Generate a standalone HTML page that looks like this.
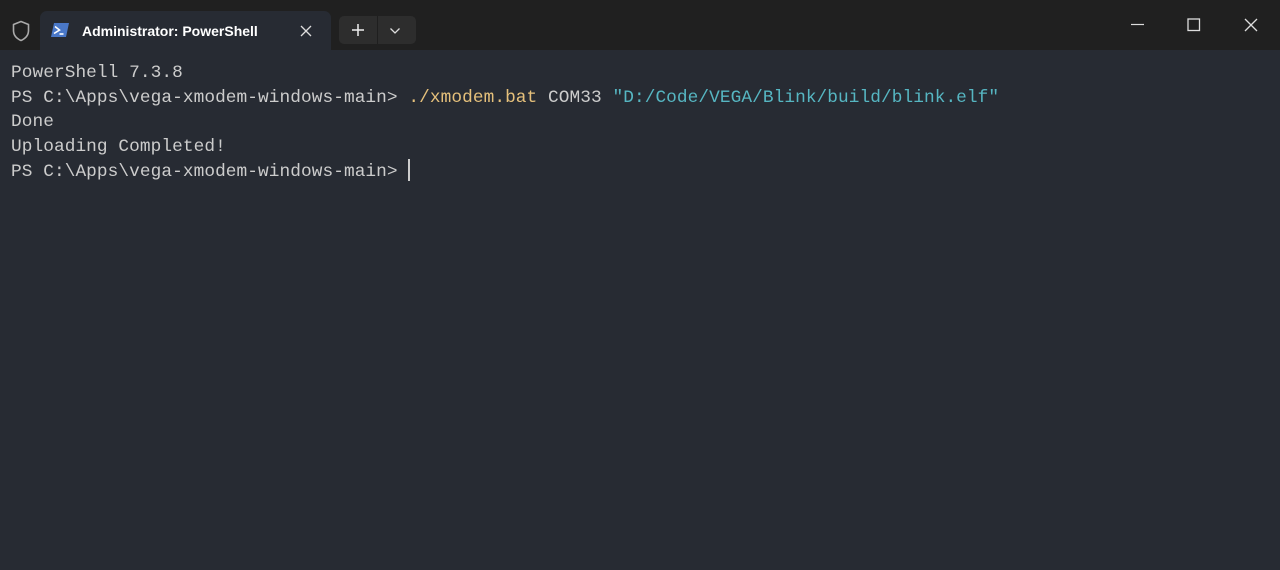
<!DOCTYPE html>
<html><head><style>
body{margin:0;width:1280px;height:570px;overflow:hidden;background:#202020;font-family:"Liberation Sans",sans-serif}
.term{position:absolute;left:0;top:50px;width:1280px;height:520px;background:#272b33}
.tab{position:absolute;left:40px;top:11px;width:291px;height:39px;background:#272b33;border-radius:7px 7px 0 0}
.tab .t{position:absolute;left:42px;top:12px;color:#fff;font-size:14px;font-weight:bold;letter-spacing:0px}
.btns{position:absolute;left:339px;top:16px;width:77px;height:28px;background:#2d2d2d;border-radius:5px}
.btns .sep{position:absolute;left:38px;top:0;width:1px;height:28px;background:#1f1f1f}
pre{margin:0;position:absolute;left:11px;top:61px;font-family:"Liberation Mono",monospace;font-size:17.8px;letter-spacing:0.07px;line-height:24.5px;color:#cccccc}
.y{color:#e5c07b}.c{color:#56b6c2}
.cur{display:inline-block;width:1.5px;height:22px;background:#ccc;vertical-align:-5px}
</style></head><body>
<svg style="position:absolute;left:11px;top:20px" width="20" height="22" viewBox="0 0 20 22"><path d="M10 1.5 L17.5 4.5 V10.5 C17.5 15 14.5 18.5 10 20.5 C5.5 18.5 2.5 15 2.5 10.5 V4.5 Z" fill="none" stroke="#aaa" stroke-width="1.6" stroke-linejoin="round"/></svg>
<div class="tab">
<svg style="position:absolute;left:10px;top:11px" width="20" height="16" viewBox="0 0 20 16"><path d="M4 1 H19 L16 15 H1 Z" fill="#4a78c8"/><path d="M5 4.5 L9.5 8 L4 11.5" fill="none" stroke="#fff" stroke-width="1.6"/><path d="M9.5 12 H13.5" stroke="#fff" stroke-width="1.6"/></svg>
<div class="t">Administrator: PowerShell</div>
<svg style="position:absolute;left:260px;top:14px" width="12" height="12"><path d="M1 1 L11 11 M11 1 L1 11" stroke="#ddd" stroke-width="1.3"/></svg>
</div>
<div class="btns"><div class="sep"></div>
<svg style="position:absolute;left:12px;top:7px" width="14" height="14"><path d="M7 1 V13 M1 7 H13" stroke="#eee" stroke-width="1.5"/></svg>
<svg style="position:absolute;left:50px;top:11px" width="12" height="8"><path d="M1.5 1.5 L6 6 L10.5 1.5" fill="none" stroke="#ddd" stroke-width="1.3"/></svg>
</div>
<svg style="position:absolute;left:1131px;top:23px" width="14" height="3"><path d="M0 1.5 H13" stroke="#ddd" stroke-width="1.2"/></svg>
<svg style="position:absolute;left:1187px;top:18px" width="14" height="14"><rect x="1" y="1" width="11.5" height="11.5" fill="none" stroke="#ddd" stroke-width="1.3"/></svg>
<svg style="position:absolute;left:1244px;top:18px" width="14" height="14"><path d="M1 1 L13 13 M13 1 L1 13" stroke="#ddd" stroke-width="1.3"/></svg>
<div class="term"></div>
<pre>PowerShell 7.3.8
PS C:\Apps\vega-xmodem-windows-main> <span class="y">./xmodem.bat</span> COM33 <span class="c">"D:/Code/VEGA/Blink/build/blink.elf"</span>
Done
Uploading Completed!
PS C:\Apps\vega-xmodem-windows-main> <span class="cur"></span></pre>
</body></html>
